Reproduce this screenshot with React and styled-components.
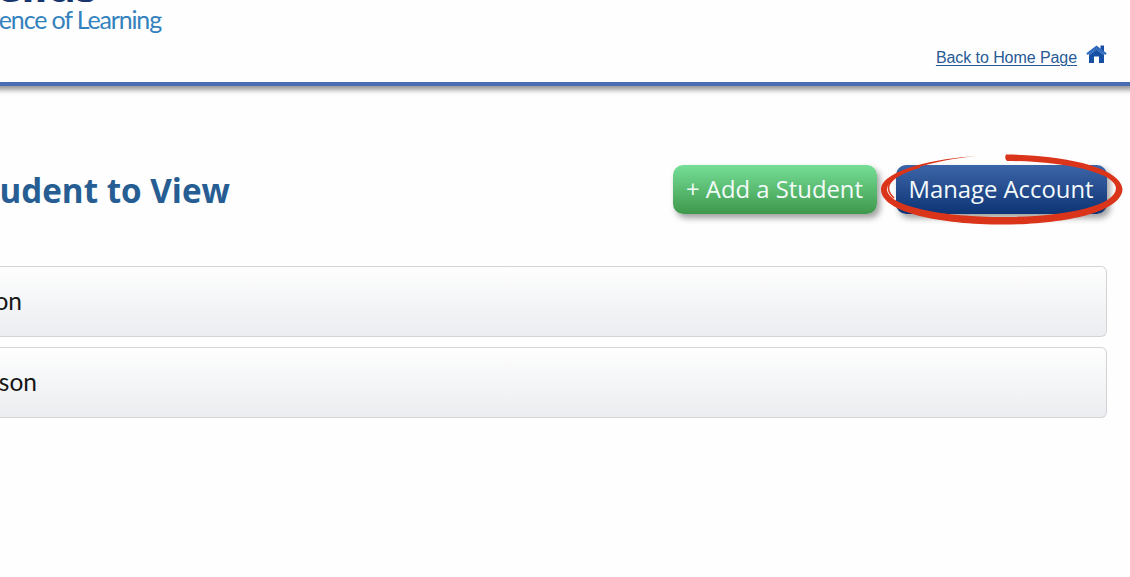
import React from "react";
import styled, { createGlobalStyle } from "styled-components";

const GlobalStyle = createGlobalStyle`
  * { box-sizing: border-box; }
  body { margin: 0; background: #fefefe; overflow: hidden; }
`;

const Page = styled.div`
  width: 1130px;
  height: 577px;
  overflow: hidden;
  background: #fefefe;
`;

const Header = styled.header`
  height: 86px;
  display: flex;
  justify-content: space-between;
  border-bottom: 4px solid #4a6cb3;
  box-shadow: 0 0 5px 4px rgba(0, 0, 0, 0.4);
`;

const Brand = styled.div`
  width: 161px;
  display: flex;
  flex-direction: column;
  align-items: flex-end;
  white-space: nowrap;
`;

const BrandName = styled.div`
  height: 6px;
  display: flex;
  align-items: flex-end;
  margin-right: 64px;
  font: 700 44px/42px "Open Sans", sans-serif;
  letter-spacing: -0.5px;
  color: #17356f;
`;

const Tagline = styled.div`
  margin-top: -1px;
  font: 400 25px/28px Lato, sans-serif;
  letter-spacing: -1.15px;
  color: #3482bd;
`;

const HomeLink = styled.a`
  display: flex;
  align-items: flex-start;
  gap: 9px;
  padding: 44px 23px 0 0;
  color: #285b96;
  font: 16px/27px "Liberation Sans", Arial, sans-serif;
  span {
    letter-spacing: -0.07px;
    text-decoration: underline;
    text-underline-offset: 2px;
    text-decoration-thickness: 1px;
  }
`;

const TitleRow = styled.div`
  display: flex;
  justify-content: space-between;
  align-items: center;
  height: 49px;
  margin-top: 79px;
  padding-right: 23px;
`;

const Title = styled.h1`
  margin: 0;
  width: 230px;
  padding-top: 2px;
  display: flex;
  justify-content: flex-end;
  white-space: nowrap;
  font: 700 33.2px/47px "Open Sans", sans-serif;
  color: #265d92;
`;

const Actions = styled.div`
  display: flex;
  gap: 19px;
`;

const Button = styled.button`
  position: relative;
  width: ${(p) => p.$width}px;
  height: 49px;
  padding: 0 1px 1px 0;
  border: 0;
  border-radius: 10px;
  color: #f4fbfb;
  white-space: nowrap;
  font: 400 23.85px/48px "Open Sans", sans-serif;
  background: ${(p) => (p.$primary ? "linear-gradient(#3c65a7, #0d3475)" : "linear-gradient(#76df97, #3e984b)")};
  box-shadow: 3px 4px 6px rgba(0, 0, 0, 0.38);
`;

const Marker = styled.svg`
  position: absolute;
  left: -18px;
  top: -15px;
  pointer-events: none;
`;

const StudentList = styled.div`
  display: flex;
  flex-direction: column;
  gap: 10px;
  margin-top: 52px;
  padding-right: 23px;
`;

const StudentRow = styled.div`
  height: 71px;
  display: flex;
  align-items: center;
  border: 1px solid #d2d4d6;
  border-left: 0;
  border-radius: 0 6px 6px 0;
  background: linear-gradient(#fefefe, #ebedf0);
`;

const StudentName = styled.div`
  width: ${(p) => p.$width}px;
  padding-bottom: 2px;
  display: flex;
  justify-content: flex-end;
  font: 400 24.5px/36px Lato, sans-serif;
  color: #161616;
`;

export default function App() {
  return (
    <Page>
      <GlobalStyle />
      <Header>
        <Brand>
          <BrandName>ellus</BrandName>
          <Tagline>ence of Learning</Tagline>
        </Brand>
        <HomeLink>
          <span>Back to Home Page</span>
          <svg width="21" height="20" viewBox="0 0 21 20">
            <path d="M14.5 1.5H18V8l-3.5-3zM3 10l7.5-6L18 10v9h-5v-6.5H8V19H3z" fill="#164fa4" />
            <path d="M1 10.2 10.5 3l9.5 7.2" fill="none" stroke="#2e69bd" strokeWidth="2.2" />
            <path d="M3.5 10.8 10.5 5.5l7 5.3" fill="none" stroke="#7ba2d8" strokeWidth=".6" />
          </svg>
        </HomeLink>
      </Header>
      <TitleRow>
        <Title>udent to View</Title>
        <Actions>
          <Button $width={204}>+ Add a Student</Button>
          <Button $width={211} $primary>
            Manage Account
            <Marker width="250" height="76" viewBox="878 150 250 76">
              <path d="M978 156C936 158 884 170 881 188C879 212 940 224.5 1003 224.5C1065 224.5 1122 212 1122.5 189C1121 169 1070 155 1006 154.5Q1004 158 1007 161C1065 161 1115 173 1116 188C1116 207 1060 217 1003 217C945 217 887 207 887 189C889 174 930 160 978 156Z" fill="#da351a" />
              <path d="M920 167C892 175 881 186 894 198" fill="none" stroke="#da351a" strokeWidth="1.5" />
            </Marker>
          </Button>
        </Actions>
      </TitleRow>
      <StudentList>
        <StudentRow><StudentName $width={22}>on</StudentName></StudentRow>
        <StudentRow><StudentName $width={37}>son</StudentName></StudentRow>
      </StudentList>
    </Page>
  );
}
